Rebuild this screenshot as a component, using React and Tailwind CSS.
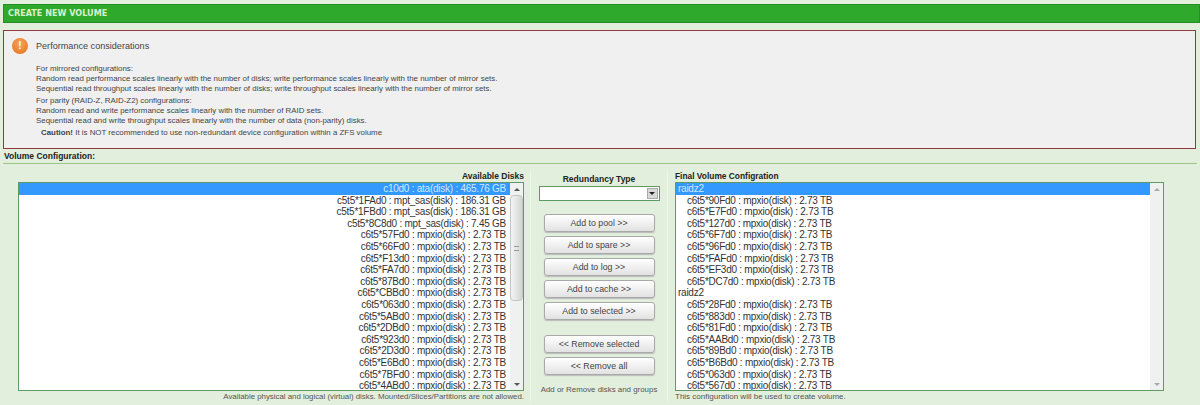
const availableDisks = [
  'c5t5*1FAd0 : mpt_sas(disk) : 186.31 GB',
  'c5t5*1FBd0 : mpt_sas(disk) : 186.31 GB',
  'c5t5*8C8d0 : mpt_sas(disk) : 7.45 GB',
  'c6t5*57Fd0 : mpxio(disk) : 2.73 TB',
  'c6t5*66Fd0 : mpxio(disk) : 2.73 TB',
  'c6t5*F13d0 : mpxio(disk) : 2.73 TB',
  'c6t5*FA7d0 : mpxio(disk) : 2.73 TB',
  'c6t5*87Bd0 : mpxio(disk) : 2.73 TB',
  'c6t5*CBBd0 : mpxio(disk) : 2.73 TB',
  'c6t5*063d0 : mpxio(disk) : 2.73 TB',
  'c6t5*5ABd0 : mpxio(disk) : 2.73 TB',
  'c6t5*2DBd0 : mpxio(disk) : 2.73 TB',
  'c6t5*923d0 : mpxio(disk) : 2.73 TB',
  'c6t5*2D3d0 : mpxio(disk) : 2.73 TB',
  'c6t5*E6Bd0 : mpxio(disk) : 2.73 TB',
  'c6t5*7BFd0 : mpxio(disk) : 2.73 TB',
  'c6t5*4ABd0 : mpxio(disk) : 2.73 TB',
]

const finalConfig = [
  'c6t5*90Fd0 : mpxio(disk) : 2.73 TB',
  'c6t5*E7Fd0 : mpxio(disk) : 2.73 TB',
  'c6t5*127d0 : mpxio(disk) : 2.73 TB',
  'c6t5*6F7d0 : mpxio(disk) : 2.73 TB',
  'c6t5*96Fd0 : mpxio(disk) : 2.73 TB',
  'c6t5*FAFd0 : mpxio(disk) : 2.73 TB',
  'c6t5*EF3d0 : mpxio(disk) : 2.73 TB',
  'c6t5*DC7d0 : mpxio(disk) : 2.73 TB',
  'raidz2',
  'c6t5*28Fd0 : mpxio(disk) : 2.73 TB',
  'c6t5*883d0 : mpxio(disk) : 2.73 TB',
  'c6t5*81Fd0 : mpxio(disk) : 2.73 TB',
  'c6t5*AABd0 : mpxio(disk) : 2.73 TB',
  'c6t5*89Bd0 : mpxio(disk) : 2.73 TB',
  'c6t5*B6Bd0 : mpxio(disk) : 2.73 TB',
  'c6t5*063d0 : mpxio(disk) : 2.73 TB',
  'c6t5*567d0 : mpxio(disk) : 2.73 TB',
]

const ScrollBar = ({ thumb }) => (
  <div className="w-[13px] shrink-0 flex flex-col bg-[#f0f0f0]">
    <div className="h-[12px] flex items-center justify-center">
      <div className={`w-0 h-0 border-x-[3px] border-x-transparent border-b-[3px] ${thumb ? 'border-b-[#555]' : 'border-b-[#aaa]'}`} />
    </div>
    {thumb && (
      <div className="h-[106px] bg-gradient-to-r from-[#f4f4f4] to-[#d4d4d4] border border-[#c4c4c4] rounded-sm flex items-center justify-center">
        <div className="w-[5px] h-[5px] border-y border-[#999]" />
      </div>
    )}
    <div className="flex-1" />
    <div className="h-[12px] flex items-center justify-center">
      <div className={`w-0 h-0 border-x-[3px] border-x-transparent border-t-[3px] ${thumb ? 'border-t-[#555]' : 'border-t-[#aaa]'}`} />
    </div>
  </div>
)

const Row = ({ children, className = '' }) => (
  <div className={`h-[11.6px] leading-[11.6px] whitespace-nowrap ${className}`}>{children}</div>
)

const ActionButton = ({ label, className = '' }) => (
  <button className={`w-[111px] h-[18px] rounded-[3px] border border-[#a9a9a9] bg-gradient-to-b from-white to-[#e2e2e2] text-[8.8px] leading-none text-[#444] shadow-[0_1px_1px_#bbb] ${className}`}>
    {label}
  </button>
)

const App = () => (
  <div className="h-[405px] w-[1200px] overflow-hidden bg-[#e2efdc] pt-[4px] pl-[3px] font-['Liberation_Sans',sans-serif] text-[#333]">
    <div className="h-[19px] bg-[#2fa92b] border border-[#2a8c28] pl-[4px] text-[8.1px] leading-[17px] font-bold text-[#d8f0d0] font-['DejaVu_Sans',sans-serif]">
      CREATE NEW VOLUME
    </div>

    {/* Warning box */}
    <div className="mt-[7px] mr-[4px] h-[119px] bg-[#f0f0f0] border border-[#8e3a3f] flex">
      <div className="w-[32px] shrink-0 pt-[7px] pl-[8px]">
        <div className="w-[16px] h-[16px] rounded-full bg-[radial-gradient(circle_at_50%_35%,#f9a45a,#e2701c)] text-white text-[10px] leading-[16px] font-bold text-center">!</div>
      </div>
      <div className="text-[7.9px] leading-[10px] text-[#444]">
        <div className="mt-[9px] text-[9.1px] leading-[12px]">Performance considerations</div>
        <div className="mt-[12px]">For mirrored configurations:</div>
        <div>Random read performance scales linearly with the number of disks; write performance scales linearly with the number of mirror sets.</div>
        <div>Sequential read throughput scales linearly with the number of disks; write throughput scales linearly with the number of mirror sets.</div>
        <div className="mt-[2px] leading-[10px]">For parity (RAID-Z, RAID-Z2) configurations:</div>
        <div>Random read and write performance scales linearly with the number of RAID sets.</div>
        <div>Sequential read and write throughput scales linearly with the number of data (non-parity) disks.</div>
        <div className="mt-[2px] pl-[5px]"><b>Caution!</b> It is NOT recommended to use non-redundant device configuration within a ZFS volume</div>
      </div>
    </div>

    <div className="mt-[2px] mr-[3px] h-[13px] border-b border-[#9cc58c] pl-px text-[8.5px] leading-[10px] font-bold text-[#222]">
      Volume Configuration:
    </div>

    <div className="mt-[6px] flex">
      {/* Available disks */}
      <div className="ml-[15px] w-[506px] shrink-0">
        <div className="h-[12px] text-right text-[8.5px] leading-[12px] font-bold text-[#222]">Available Disks</div>
        <div className="h-[209px] border border-[#5f9a66] bg-white flex overflow-hidden">
          <div className="flex-1 text-[10px] tracking-[-0.25px] text-[#333] text-right overflow-hidden">
            <Row className="bg-[#3399ff] text-[#cfe6ff] pr-[4px]">c10d0 : ata(disk) : 465.76 GB</Row>
            {availableDisks.map((d, i) => (
              <Row key={i} className="pr-[4px]">{d}</Row>
            ))}
          </div>
          <ScrollBar thumb />
        </div>
        <div className="mt-[1px] text-right text-[7.85px] leading-[10px] text-[#555]">
          Available physical and logical (virtual) disks. Mounted/Slices/Partitions are not allowed.
        </div>
      </div>

      {/* Redundancy and actions */}
      <div className="ml-[6px] w-[138px] shrink-0 border-x border-[#ecf5e8] flex flex-col items-center">
        <div className="mt-[-6px] pt-[9px] text-[8.5px] leading-[12px] font-bold text-[#222]">Redundancy Type</div>
        <div className="mt-[1px] w-[121px] h-[15px] border border-[#5f9a66] bg-white flex justify-end items-center pr-[1px]">
          <div className="w-[11px] h-[11px] bg-[#d8d8d8] border border-[#aaa] flex items-center justify-center">
            <div className="w-0 h-0 border-x-[3px] border-x-transparent border-t-[3px] border-t-[#222]" />
          </div>
        </div>
        <div className="mt-[13px] flex flex-col gap-[4px] items-center">
          <ActionButton label="Add to pool >>" />
          <ActionButton label="Add to spare >>" />
          <ActionButton label="Add to log >>" />
          <ActionButton label="Add to cache >>" />
          <ActionButton label="Add to selected >>" />
          <ActionButton label="<< Remove selected" className="mt-[11px]" />
          <ActionButton label="<< Remove all" />
        </div>
        <div className="mt-[10px] text-[7.9px] leading-[10px] text-[#555]">Add or Remove disks and groups</div>
      </div>

      {/* Final configuration */}
      <div className="ml-[7px] w-[489px] shrink-0">
        <div className="h-[12px] text-[8.4px] leading-[12px] font-bold text-[#222]">Final Volume Configration</div>
        <div className="h-[209px] border border-[#5f9a66] bg-white flex overflow-hidden">
          <div className="flex-1 text-[10px] tracking-[-0.25px] text-[#333] overflow-hidden">
            <Row className="bg-[#3399ff] text-[#cfe6ff] pl-[2px]">raidz2</Row>
            {finalConfig.map((d, i) => (
              <Row key={i} className={d === 'raidz2' ? 'pl-[2px]' : 'pl-[11px]'}>{d}</Row>
            ))}
          </div>
          <ScrollBar />
        </div>
        <div className="mt-[1px] text-[8px] leading-[10px] text-[#555]">This configuration will be used to create volume.</div>
      </div>
    </div>
  </div>
)

export default App
